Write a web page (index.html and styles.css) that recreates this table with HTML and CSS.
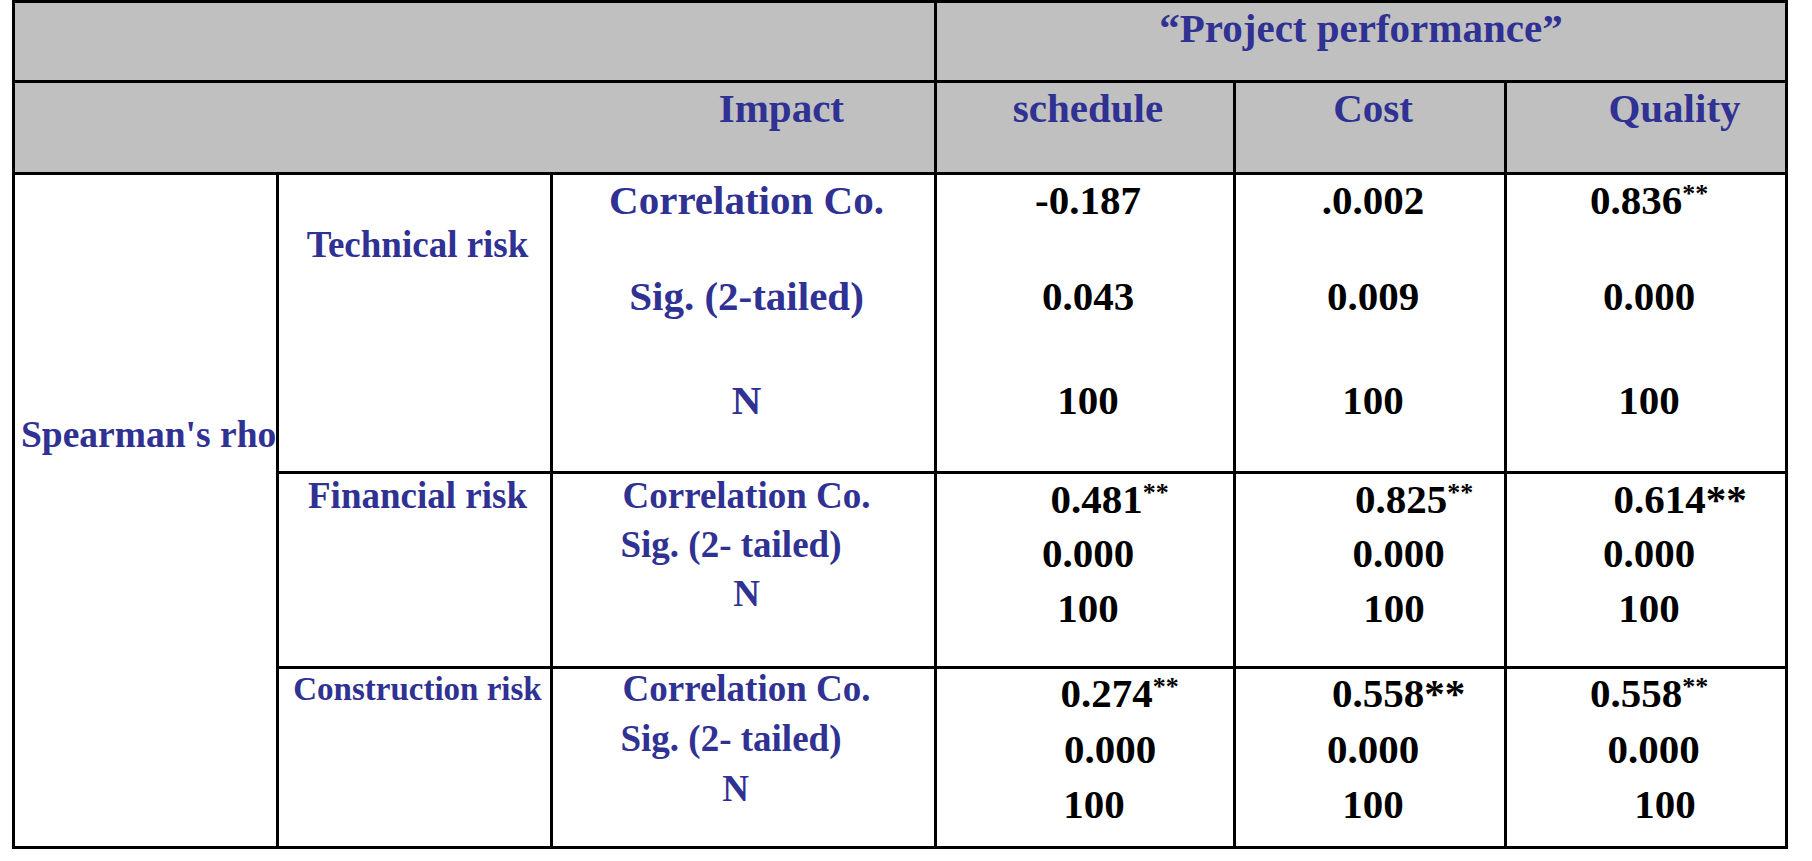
FILE: index.html
```html
<!DOCTYPE html>
<html lang="en">
<head>
<meta charset="utf-8">
<title>Spearman's rho correlations</title>
<link rel="stylesheet" href="styles.css">
</head>
<body>
<div class="sheet">
  <div class="grid">
    <div class="c hd span-3"></div>
    <div class="c hd span-3 title">“Project performance”</div>

    <div class="c hd span-3 impact">Impact</div>
    <div class="c hd col">schedule</div>
    <div class="c hd col">Cost</div>
    <div class="c hd col quality">Quality</div>

    <div class="c rho">Spearman's rho</div>

    <div class="c risk risk-tech">Technical risk</div>
    <div class="c stats lines-tech">
      <div class="ln big">Correlation Co.</div>
      <div class="ln big">Sig. (2-tailed)</div>
      <div class="ln big">N</div>
    </div>
    <div class="c vals lines-tech">
      <div class="ln big">-0.187</div>
      <div class="ln big">0.043</div>
      <div class="ln big">100</div>
    </div>
    <div class="c vals lines-tech">
      <div class="ln big">.0.002</div>
      <div class="ln big">0.009</div>
      <div class="ln big">100</div>
    </div>
    <div class="c vals lines-tech">
      <div class="ln big">0.836<span class="sup">**</span></div>
      <div class="ln big">0.000</div>
      <div class="ln big">100</div>
    </div>

    <div class="c risk risk-fin">Financial risk</div>
    <div class="c stats labels-fin">
      <div class="ln small">Correlation Co.</div>
      <div class="ln small ind-n31">Sig. (2- tailed)</div>
      <div class="ln small">N</div>
    </div>
    <div class="c vals vals-fin">
      <div class="ln big ind-43">0.481<span class="sup">**</span></div>
      <div class="ln big">0.000</div>
      <div class="ln big">100</div>
    </div>
    <div class="c vals vals-fin">
      <div class="ln big ind-82">0.825<span class="sup">**</span></div>
      <div class="ln big ind-51">0.000</div>
      <div class="ln big ind-42">100</div>
    </div>
    <div class="c vals vals-fin">
      <div class="ln big ind-62">0.614**</div>
      <div class="ln big">0.000</div>
      <div class="ln big">100</div>
    </div>

    <div class="c risk risk-con">Construction risk</div>
    <div class="c stats labels-con">
      <div class="ln small">Correlation Co.</div>
      <div class="ln small ind-n31">Sig. (2- tailed)</div>
      <div class="ln small ind-n22">N</div>
    </div>
    <div class="c vals vals-con">
      <div class="ln big ind-63">0.274<span class="sup">**</span></div>
      <div class="ln big ind-44">0.000</div>
      <div class="ln big ind-12">100</div>
    </div>
    <div class="c vals vals-con">
      <div class="ln big ind-51">0.558**</div>
      <div class="ln big">0.000</div>
      <div class="ln big">100</div>
    </div>
    <div class="c vals vals-con">
      <div class="ln big">0.558<span class="sup">**</span></div>
      <div class="ln big ind-9">0.000</div>
      <div class="ln big ind-32">100</div>
    </div>
  </div>
</div>
</body>
</html>
```

FILE: styles.css
```css
html, body {
  margin: 0;
  padding: 0;
  background: #ffffff;
}

body {
  font-family: "Liberation Serif", "Times New Roman", serif;
  font-weight: bold;
  color: #000000;
}

.sheet {
  padding-left: 12px;
}

.grid {
  display: grid;
  width: max-content;
  grid-template-columns: 261px 271px 381px 296px 268px 278px;
  grid-template-rows: 77px 89px 296px 192px 177px;
  gap: 3px;
  padding: 3px;
  background: #000000;
}

.c {
  background: #ffffff;
  white-space: nowrap;
}

/* header rows */
.hd {
  background: #c0c0c0;
  color: #2f3193;
  font-size: 41px;
  line-height: 48px;
  padding-top: 1px;
  text-align: center;
}

.span-3 {
  grid-column: span 3;
}

.impact {
  text-align: right;
  padding-right: 90px;
}

.col {
  padding-left: 6px;
}

.quality {
  text-indent: 51px;
}

/* first column */
.rho {
  grid-column: 1;
  grid-row: 3 / span 3;
  color: #2f3193;
  font-size: 37.5px;
  line-height: 44px;
  padding: 238px 0 0 6px;
}

/* risk column */
.risk {
  color: #2f3193;
  font-size: 37px;
  line-height: 40px;
  text-align: center;
  padding-left: 6px;
}

.risk-tech {
  padding-top: 50px;
}

.risk-fin {
  padding-top: 2px;
}

.risk-con {
  font-size: 33px;
  padding-top: 0;
}

/* statistic labels and values */
.stats {
  color: #2f3193;
  text-align: center;
  padding-left: 6px;
}

.vals {
  color: #000000;
  text-align: center;
  padding-left: 6px;
}

.big {
  font-size: 41px;
  line-height: 48px;
  height: 48px;
}

.small {
  font-size: 37px;
  line-height: 40px;
  height: 40px;
}

.sup {
  font-size: 26px;
  line-height: 0;
  vertical-align: 12px;
}

.lines-tech {
  padding-top: 1px;
}
.lines-tech .ln:nth-child(2) { margin-top: 48px; }
.lines-tech .ln:nth-child(3) { margin-top: 56px; }

.labels-fin {
  padding-top: 2px;
}
.labels-fin .ln:nth-child(2) { margin-top: 9px; }
.labels-fin .ln:nth-child(3) { margin-top: 9px; }

.vals-fin {
  padding-top: 1px;
}
.vals-fin .ln:nth-child(2) { margin-top: 6px; }
.vals-fin .ln:nth-child(3) { margin-top: 7px; }

.labels-con {
  padding-top: 0;
}
.labels-con .ln:nth-child(2) { margin-top: 10px; }
.labels-con .ln:nth-child(3) { margin-top: 10px; }

.vals-con {
  padding-top: 0;
}
.vals-con .ln:nth-child(2) { margin-top: 8px; }
.vals-con .ln:nth-child(3) { margin-top: 7px; }

/* per-line offsets (as in the source document) */
.ind-9 { text-indent: 9px; }
.ind-12 { text-indent: 12px; }
.ind-32 { text-indent: 32px; }
.ind-42 { text-indent: 42px; }
.ind-43 { text-indent: 43px; }
.ind-44 { text-indent: 44px; }
.ind-51 { text-indent: 51px; }
.ind-62 { text-indent: 62px; }
.ind-63 { text-indent: 63px; }
.ind-82 { text-indent: 82px; }
.ind-n22 { text-indent: -22px; }
.ind-n31 { text-indent: -31px; }
```
